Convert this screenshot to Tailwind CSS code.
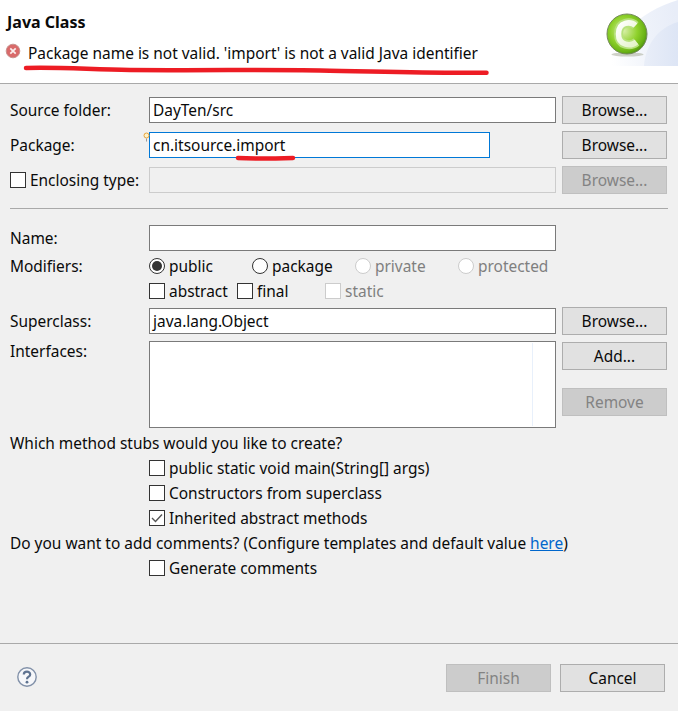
<!DOCTYPE html>
<html lang="en">
<head>
    <meta charset="UTF-8">
    <title>Java Class</title>
    <script src="https://cdn.jsdelivr.net/npm/@tailwindcss/browser@4"></script>
</head>
<body class="bg-[#f0f0f0] font-['Noto_Sans',sans-serif] text-[15.45px] text-[#0a0a0a] leading-[20px]">
<div class="relative w-[678px] h-[711px] overflow-hidden">

    <!-- banner -->
    <header class="relative h-[84px] bg-white border-b border-[#a9a9a9] overflow-hidden">
        <svg class="absolute left-[598px] top-0" width="80" height="66" viewBox="0 0 80 66">
            <defs>
                <linearGradient id="wash" x1="0" y1="0.6" x2="1" y2="0.4">
                    <stop offset="0" stop-color="#ffffff"/>
                    <stop offset="0.6" stop-color="#eef2fa"/>
                    <stop offset="1" stop-color="#e8edf8"/>
                </linearGradient>
                <linearGradient id="wash2" x1="0" y1="0.5" x2="1" y2="0.5">
                    <stop offset="0" stop-color="#e9eef8"/>
                    <stop offset="1" stop-color="#dde5f5"/>
                </linearGradient>
            </defs>
            <path d="M9 66C14 40 40 12 80 0V66Z" fill="url(#wash)"/>
            <path d="M46 66C47 48 58 28 80 22V66Z" fill="url(#wash2)"/>
        </svg>
        <svg class="absolute left-[606px] top-[13px]" width="44" height="46" viewBox="0 0 44 46">
            <defs>
                <radialGradient id="ball" cx="0.42" cy="0.42" r="0.62">
                    <stop offset="0" stop-color="#d8efa8"/>
                    <stop offset="0.55" stop-color="#8fd12c"/>
                    <stop offset="0.85" stop-color="#6ab315"/>
                    <stop offset="1" stop-color="#4d8f12"/>
                </radialGradient>
                <linearGradient id="letter" x1="0" y1="0" x2="1" y2="1">
                    <stop offset="0" stop-color="#ffffff"/>
                    <stop offset="1" stop-color="#e4f3c8"/>
                </linearGradient>
            </defs>
            <ellipse cx="21.5" cy="41.5" rx="16" ry="2" fill="#a9ad9a" opacity="0.55"/>
            <circle cx="21" cy="21" r="20" fill="url(#ball)" stroke="#75895c"/>
            <path d="M29.5 12.5C25 8.5 12.5 8 12.5 21C12.5 33 25 33.5 30.5 29" fill="none" stroke="#b7e27d" stroke-width="9"/>
            <path d="M29.5 12.5C25 8.5 12.5 8 12.5 21C12.5 33 25 33.5 30.5 29" fill="none" stroke="url(#letter)" stroke-width="5.5"/>
        </svg>
        <h1 class="absolute left-[7px] top-[11px] text-[16px] font-bold leading-[22px]">Java Class</h1>
        <svg class="absolute left-[5px] top-[43px]" width="16" height="16" viewBox="0 0 16 16">
            <circle cx="8" cy="8" r="6.8" fill="#d96a6a" stroke="#c9928f"/>
            <path d="M5.3 5.3l5.4 5.4M10.7 5.3l-5.4 5.4" stroke="#fbeeee" stroke-width="1.7"/>
        </svg>
        <p class="absolute left-[28px] top-[43px]">Package name is not valid. 'import' is not a valid Java identifier</p>
    </header>

    <main class="px-[10px]">
        <div class="flex items-center h-[28px] mt-[12px]">
            <label class="w-[139px]">Source folder:</label>
            <div class="w-[407px] h-[26px] bg-white border border-[#7a7a7a] px-[3px] leading-[24px]">DayTen/src</div>
            <button class="w-[105px] h-[28px] ml-[6px] bg-[#e1e1e1] border border-[#adadad]">Browse...</button>
        </div>
        <div class="flex items-center h-[28px] mt-[7px]">
            <label class="w-[139px]">Package:</label>
            <div class="w-[341px] h-[26px] bg-white border border-[#0078d7] px-[3px] leading-[24px]">cn.itsource.import</div>
            <button class="w-[105px] h-[28px] ml-[72px] bg-[#e1e1e1] border border-[#adadad]">Browse...</button>
        </div>
        <div class="flex items-center h-[28px] mt-[7px]">
            <label class="flex items-center w-[139px]"><span class="w-[16px] h-[16px] bg-white border border-[#333] mr-[4px]"></span>Enclosing type:</label>
            <div class="w-[407px] h-[26px] bg-[#f0f0f0] border border-[#cccccc]"></div>
            <button class="w-[105px] h-[28px] ml-[6px] bg-[#cccccc] border border-[#bfbfbf] text-[#838383]">Browse...</button>
        </div>
    </main>

    <div class="mt-[14px] h-px bg-[#a9a9a9] mx-[10px]"></div>

    <section class="px-[10px]">
        <div class="flex items-center h-[26px] mt-[16px]">
            <label class="w-[139px]">Name:</label>
            <div class="w-[407px] h-[26px] bg-white border border-[#7a7a7a]"></div>
        </div>

        <div class="flex items-center h-[20px] mt-[5px]">
            <label class="w-[139px]">Modifiers:</label>
            <div class="flex items-center w-[103px]">
                <span class="flex items-center justify-center w-[16px] h-[16px] rounded-full bg-white border border-[#333] mr-[4px]"><span class="w-[10px] h-[10px] rounded-full bg-[#333]"></span></span>public
            </div>
            <div class="flex items-center w-[103px]">
                <span class="w-[16px] h-[16px] rounded-full bg-white border border-[#333] mr-[4px]"></span>package
            </div>
            <div class="flex items-center w-[103px] text-[#7f7f7f]">
                <span class="w-[16px] h-[16px] rounded-full bg-white border border-[#cccccc] mr-[4px]"></span>private
            </div>
            <div class="flex items-center text-[#7f7f7f]">
                <span class="w-[16px] h-[16px] rounded-full bg-white border border-[#cccccc] mr-[4px]"></span>protected
            </div>
        </div>

        <div class="flex items-center h-[20px] mt-[5px] pl-[139px]">
            <div class="flex items-center w-[88px]">
                <span class="w-[16px] h-[16px] bg-white border border-[#333] mr-[4px]"></span>abstract
            </div>
            <div class="flex items-center w-[88px]">
                <span class="w-[16px] h-[16px] bg-white border border-[#333] mr-[4px]"></span>final
            </div>
            <div class="flex items-center text-[#7f7f7f]">
                <span class="w-[16px] h-[16px] bg-white border border-[#cccccc] mr-[4px]"></span>static
            </div>
        </div>

        <div class="flex items-center h-[28px] mt-[6px]">
            <label class="w-[139px]">Superclass:</label>
            <div class="w-[407px] h-[26px] bg-white border border-[#7a7a7a] px-[3px] leading-[24px]">java.lang.Object</div>
            <button class="w-[105px] h-[28px] ml-[6px] bg-[#e1e1e1] border border-[#adadad]">Browse...</button>
        </div>

        <div class="flex items-start mt-[6px]">
            <label class="w-[139px]">Interfaces:</label>
            <div class="w-[407px] h-[87px] bg-white border border-[#7a7a7a] flex justify-end">
                <div class="w-[23px] my-[1px] border-l border-[#e8f0fb]"></div>
            </div>
            <div class="flex flex-col ml-[6px] mt-[1px]">
                <button class="w-[105px] h-[28px] bg-[#e1e1e1] border border-[#adadad]">Add...</button>
                <button class="w-[105px] h-[28px] mt-[18px] bg-[#cccccc] border border-[#bfbfbf] text-[#838383]">Remove</button>
            </div>
        </div>

        <p class="mt-[5px] h-[20px]">Which method stubs would you like to create?</p>
        <div class="flex items-center h-[20px] mt-[5px] pl-[139px]">
            <span class="w-[16px] h-[16px] bg-white border border-[#333] mr-[4px]"></span>public static void main(String[] args)
        </div>
        <div class="flex items-center h-[20px] mt-[5px] pl-[139px]">
            <span class="w-[16px] h-[16px] bg-white border border-[#333] mr-[4px]"></span>Constructors from superclass
        </div>
        <div class="flex items-center h-[20px] mt-[5px] pl-[139px]">
            <span class="flex items-center justify-center w-[16px] h-[16px] bg-white border border-[#333] mr-[4px]">
                <svg width="12" height="10" viewBox="0 0 12 10"><path d="M1 5l3.5 3.5L11 1.5" fill="none" stroke="#555" stroke-width="1.4"/></svg>
            </span>Inherited abstract methods
        </div>
        <p class="mt-[5px] h-[20px]">Do you want to add comments? (Configure templates and default value <a class="text-[#0066cc] underline">here</a>)</p>
        <div class="flex items-center h-[20px] mt-[5px] pl-[139px]">
            <span class="w-[16px] h-[16px] bg-white border border-[#333] mr-[4px]"></span>Generate comments
        </div>
    </section>

    <footer class="absolute left-0 right-0 top-[643px] h-[68px] border-t border-[#a9a9a9]">
        <div class="flex items-start pt-[20px] pl-[17px] pr-[13px]">
            <svg class="mt-[3px]" width="20" height="20" viewBox="0 0 20 20">
                <circle cx="10" cy="10" r="9.2" fill="#f6f7fa" stroke="#8291a9" stroke-width="1.4"/>
                <path d="M6.8 7.6C6.8 3.6 13.2 3.8 13.2 7.4C13.2 9.8 10 9.6 10 12.2" fill="none" stroke="#5f7391" stroke-width="2.2"/>
                <circle cx="10" cy="15.2" r="1.4" fill="#5f7391"/>
            </svg>
            <button class="w-[105px] h-[28px] ml-auto bg-[#cccccc] border border-[#bfbfbf] text-[#838383]">Finish</button>
            <button class="w-[105px] h-[28px] ml-[9px] bg-[#e1e1e1] border border-[#adadad]">Cancel</button>
        </div>
    </footer>

    <!-- red marker strokes drawn over the dialog -->
    <svg class="absolute left-0 top-0 pointer-events-none" width="678" height="711" viewBox="0 0 678 711">
        <path d="M26 68C60 67 90 69.5 130 70C210 70.5 280 69.5 320 70.5C380 71.5 430 73.5 486.5 72.7" fill="none" stroke="#ed1c24" stroke-width="4.5" stroke-linecap="round"/>
        <path d="M238 158C255 159 275 158.5 293 158" fill="none" stroke="#ed1c24" stroke-width="4.5" stroke-linecap="round"/>
    </svg>
    <svg class="absolute left-[143px] top-[132px]" width="8" height="11" viewBox="0 0 8 11">
        <circle cx="3.5" cy="3.5" r="2.5" fill="#fff3c8" stroke="#e8a33d"/>
        <path d="M3.5 6.5v3" stroke="#999"/>
    </svg>
</div>
</body>
</html>
